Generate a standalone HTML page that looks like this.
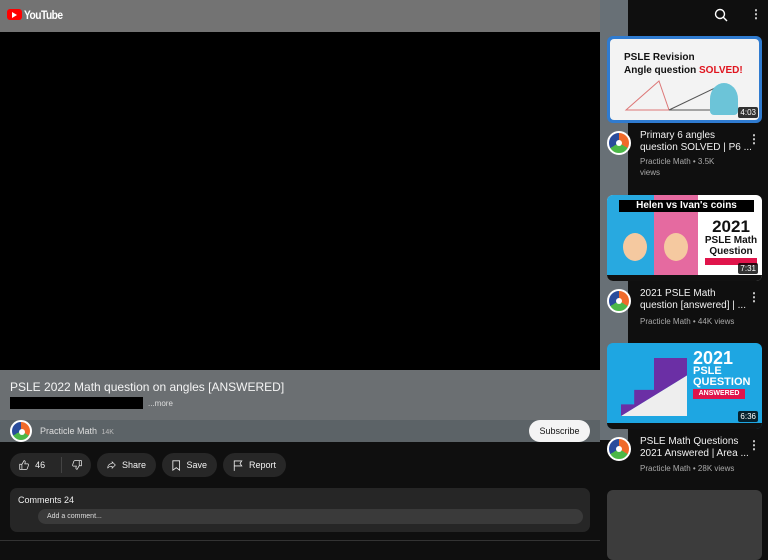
<!DOCTYPE html>
<html><head><style>
*{margin:0;padding:0;box-sizing:border-box}
body{width:768px;height:554px;background:#0f0f0f;font-family:"Liberation Sans",sans-serif;position:relative;overflow:hidden;color:#fff}
.a{position:absolute}
.av{position:absolute;width:24px;height:24px;border-radius:50%;background:conic-gradient(#f06a2a 0 120deg,#4cb848 120deg 240deg,#2a4c9c 240deg 360deg);border:2px solid #fff}
.av:after{content:"";position:absolute;left:7px;top:7px;width:6px;height:6px;background:#fff;border-radius:50%}
.t{font-size:10px;line-height:11.5px;color:#f1f1f1}
.m{font-size:8px;color:#aaa;line-height:11px}
.btn{position:absolute;top:453px;height:24px;border-radius:12px;background:#272727;font-size:9px;color:#f1f1f1;display:flex;align-items:center;padding:0 10px;gap:6px}
.dots{position:absolute;color:#ddd;font-size:12px;font-weight:bold;line-height:12px;width:4px}
.thumb{position:absolute;left:607px;width:155px;border-radius:6px;overflow:hidden}
.dur{position:absolute;right:4px;bottom:5px;background:rgba(0,0,0,.8);font-size:8px;padding:1px 2px;border-radius:2px;color:#fff}
</style></head><body>
<div class="a" style="left:0;top:0;width:600px;height:32px;background:#737373"></div>
<div class="a" style="left:600px;top:0;width:28px;height:440px;background:#687076"></div>
<div class="a" style="left:0;top:32px;width:600px;height:338px;background:#000"></div>
<div class="a" style="left:0;top:370px;width:600px;height:50px;background:#6b6f72"></div>
<div class="a" style="left:0;top:420px;width:600px;height:22px;background:#5c6367"></div>
<div class="a" style="left:7px;top:9px;width:15px;height:11px;background:#f00;border-radius:3px"></div>
<div class="a" style="left:12px;top:12px;width:0;height:0;border-left:5px solid #fff;border-top:3px solid transparent;border-bottom:3px solid transparent"></div>
<div class="a" style="left:24px;top:8px;font-size:12px;font-weight:bold;letter-spacing:-0.6px;transform:scaleX(.85);transform-origin:left">YouTube</div>
<svg class="a" style="left:714px;top:8px" width="14" height="14" viewBox="0 0 14 14"><circle cx="6" cy="6" r="4.5" stroke="#fff" stroke-width="1.4" fill="none"/><path d="M9.3 9.3L13 13" stroke="#fff" stroke-width="1.4"/></svg>
<div class="dots" style="left:750px;top:8px">⋮</div>
<div class="a" style="left:10px;top:380px;font-size:12px;color:#f4f4f4">PSLE 2022 Math question on angles [ANSWERED]</div>
<div class="a" style="left:10px;top:397px;width:133px;height:12px;background:#000"></div>
<div class="a" style="left:148px;top:399px;font-size:8px;color:#ddd">...more</div>
<div class="av" style="left:10px;top:420px;width:22px;height:22px"></div>
<div class="a" style="left:40px;top:426px;font-size:9px;color:#ddd">Practicle Math <span style="font-size:7px;color:#bbb">&nbsp;14K</span></div>
<div class="a" style="left:529px;top:420px;width:61px;height:22px;border-radius:11px;background:#f4f4f4;color:#111;font-size:9px;text-align:center;line-height:22px">Subscribe</div>
<div class="btn" style="left:10px;width:81px;padding:0 9px">
<svg width="14" height="14" viewBox="0 0 14 14" fill="none" stroke="#eee" stroke-width="1"><path d="M1 6h3v7H1zM4 6l3-5c1 0 2 1 1.5 2.5L8 5.5h4c1 0 1.5 1 1 2l-1.5 4.5c-.3.7-.7 1-1.5 1H4"/></svg><span>46</span>
<span style="width:1px;height:16px;background:#444;margin-left:10px"></span>
<svg width="14" height="14" viewBox="0 0 14 14" fill="none" stroke="#eee" stroke-width="1" style="margin-left:4px"><path d="M13 8h-3V1h3zM10 8l-3 5c-1 0-2-1-1.5-2.5L6 8.5H2c-1 0-1.5-1-1-2L2.5 2c.3-.7.7-1 1.5-1H10"/></svg></div>
<div class="btn" style="left:97px;width:59px"><svg width="14" height="12" viewBox="0 0 14 12" fill="none" stroke="#eee" stroke-width="1"><path d="M8 1l5 5-5 5V8C4 8 2 9 1 11c0-4 2-7 7-7.5z"/></svg>Share</div>
<div class="btn" style="left:162px;width:55px"><svg width="10" height="13" viewBox="0 0 10 13" fill="none" stroke="#eee" stroke-width="1"><path d="M1 1h8v11L5 9l-4 3z"/></svg>Save</div>
<div class="btn" style="left:223px;width:63px"><svg width="12" height="13" viewBox="0 0 12 13" fill="none" stroke="#eee" stroke-width="1"><path d="M1.5 13V1h9l-2 3 2 3h-9"/></svg>Report</div>
<div class="a" style="left:10px;top:488px;width:580px;height:44px;background:#262626;border-radius:7px"></div>
<div class="a" style="left:18px;top:495px;font-size:9px;color:#eee">Comments 24</div>
<div class="a" style="left:38px;top:509px;width:545px;height:15px;background:#3a3a3a;border-radius:8px;font-size:7px;color:#ddd;padding-left:9px;line-height:15px">Add a comment...</div>
<div class="a" style="left:0;top:540px;width:600px;height:1px;background:#333"></div>

<div class="thumb" style="top:36px;height:87px;background:#2f7bd0;padding:3px">
<div style="width:100%;height:100%;background:#f3f3f3;border-radius:4px;position:relative">
<div class="a" style="left:14px;top:12px;font-size:10px;font-weight:bold;color:#111;line-height:13px">PSLE Revision<br>Angle question <span style="color:#e0141e">SOLVED!</span></div>
<svg class="a" style="left:14px;top:38px" width="110" height="35"><path d="M2 33L35 4 45 33z" stroke="#d77" fill="none"/><path d="M45 33L95 9v24z" stroke="#555" fill="none"/></svg>
<div class="a" style="left:100px;top:44px;width:28px;height:32px;background:#6cc4d8;border-radius:50% 50% 4px 4px"></div>
</div><div class="dur">4:03</div></div>
<div class="thumb" style="top:195px;height:86px;background:#fff">
<div class="a" style="left:0;top:0;width:47px;height:80px;background:#28a9e0"></div>
<div class="a" style="left:47px;top:0;width:44px;height:80px;background:#e56aa0"></div>
<div class="a" style="left:12px;top:5px;width:135px;height:12px;background:#000;font-size:10px;font-weight:bold;text-align:center;line-height:12px">Helen vs Ivan's coins</div>
<div class="a" style="left:16px;top:38px;width:24px;height:28px;background:#f5c9a0;border-radius:50%"></div>
<div class="a" style="left:57px;top:38px;width:24px;height:28px;background:#f5c9a0;border-radius:50%"></div>
<div class="a" style="left:96px;top:24px;width:56px;text-align:center;color:#111;font-weight:bold">
<div style="font-size:17px;line-height:16px">2021</div>
<div style="font-size:10px;line-height:11px">PSLE Math</div>
<div style="font-size:10px;line-height:11px">Question</div></div>
<div class="a" style="left:98px;top:63px;width:52px;height:7px;background:#e0144b"></div>
<div class="a" style="left:0;top:80px;width:155px;height:6px;background:#111"></div>
<div class="dur" style="bottom:7px">7:31</div></div>
<div class="thumb" style="top:343px;height:86px;background:#1ea6e2">
<div class="a" style="left:14px;top:15px;width:66px;height:58px;background:#eee;clip-path:polygon(0 100%,100% 100%,100% 30%)"></div>
<div class="a" style="left:14px;top:15px;width:66px;height:58px;background:#6b2fa5;clip-path:polygon(0 100%,0 80%,20% 80%,20% 55%,50% 55%,50% 0,100% 0,100% 30%)"></div>
<div class="a" style="left:86px;top:7px;font-weight:bold;color:#fff">
<div style="font-size:18px;line-height:16px">2021</div>
<div style="font-size:11px;line-height:11px">PSLE</div>
<div style="font-size:11px;line-height:11px">QUESTION</div></div>
<div class="a" style="left:86px;top:46px;width:52px;height:10px;background:#e0144b;font-size:7px;font-weight:bold;text-align:center;line-height:10px">ANSWERED</div>
<div class="a" style="left:0;top:80px;width:155px;height:6px;background:#111"></div>
<div class="dur" style="bottom:7px">6:36</div></div>
<div class="a" style="left:607px;top:490px;width:155px;height:70px;background:#3c3c3c;border-radius:6px"></div>

<div class="av" style="left:607px;top:131px"></div>
<div class="a t" style="left:640px;top:130px">Primary 6 angles<br>question SOLVED | P6 ...</div>
<div class="a m" style="left:640px;top:156px">Practicle Math • 3.5K<br>views</div>
<div class="dots" style="left:748px;top:133px">⋮</div>
<div class="av" style="left:607px;top:289px"></div>
<div class="a t" style="left:640px;top:288px">2021 PSLE Math<br>question [answered] | ...</div>
<div class="a m" style="left:640px;top:316px">Practicle Math • 44K views</div>
<div class="dots" style="left:748px;top:291px">⋮</div>
<div class="av" style="left:607px;top:437px"></div>
<div class="a t" style="left:640px;top:436px">PSLE Math Questions<br>2021 Answered | Area ...</div>
<div class="a m" style="left:640px;top:463px">Practicle Math • 28K views</div>
<div class="dots" style="left:748px;top:439px">⋮</div>
</body></html>
